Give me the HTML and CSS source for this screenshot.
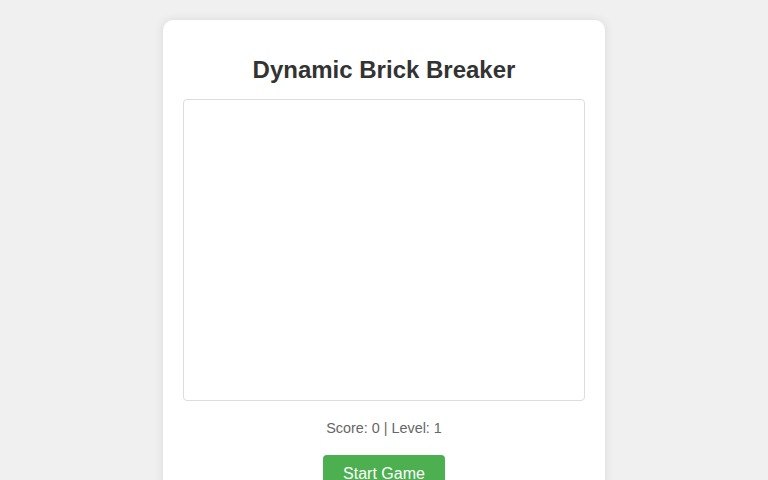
FILE: index.html
```html
<!DOCTYPE html>
<html lang="en">
<head>
<meta charset="utf-8">
<title>Dynamic Brick Breaker</title>
<link rel="stylesheet" href="styles.css">
</head>
<body>
<div class="game-container">
  <h1 class="title">Dynamic Brick Breaker</h1>
  <canvas class="board" width="400" height="300"></canvas>
  <div class="status">Score: 0 | Level: 1</div>
  <button class="start-btn">Start Game</button>
</div>
</body>
</html>
```
FILE: styles.css
```css
html, body {
  margin: 0;
  padding: 0;
}
body {
  background: #f0f0f0;
  font-family: "Liberation Sans", Arial, sans-serif;
  display: flex;
  justify-content: center;
  padding-top: 20px;
}
.game-container {
  background: #fff;
  border-radius: 10px;
  box-shadow: 0 0 10px rgba(0, 0, 0, 0.1);
  padding: 20px;
  display: flex;
  flex-direction: column;
  align-items: center;
}
.title {
  font-size: 24px;
  font-weight: bold;
  color: #333;
  margin: 16px 0 15px;
  line-height: 28px;
}
.board {
  display: block;
  width: 400px;
  height: 300px;
  border: 1px solid #ddd;
  border-radius: 4px;
  background: #fff;
}
.status {
  margin-top: 19px;
  font-size: 14.4px;
  line-height: 17px;
  color: #666;
}
.start-btn {
  margin-top: 18px;
  background: #4caf50;
  color: #fff;
  border: none;
  border-radius: 4px;
  padding: 10px 20px;
  font-family: "Liberation Sans", Arial, sans-serif;
  font-size: 16px;
  line-height: 18px;
  cursor: pointer;
}
```
